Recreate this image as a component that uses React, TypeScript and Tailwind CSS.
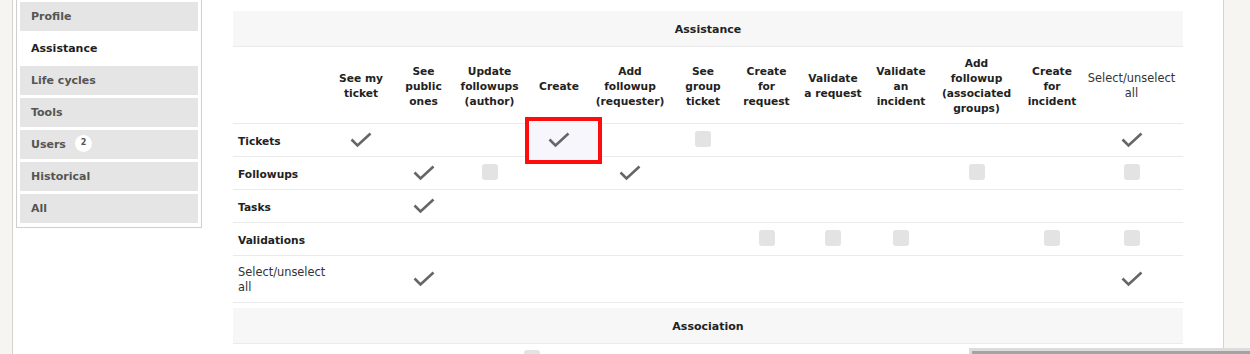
import React from "react";

const Check = () => (
  <svg width="22" height="16" viewBox="0 0 22 16" className="block">
    <path d="M1.5 7.5 L7.5 13.5 L20.5 1.5" fill="none" stroke="#666" strokeWidth="2.6" />
  </svg>
);

const Box = () => <div className="w-4 h-4 rounded-[3px] bg-[#e3e3e3]" />;

const cols =
  "grid grid-cols-[97px_62px_63px_69px_70px_72px_74px_53px_80px_56px_95px_56px_103px]";

type Cell = null | "c" | "b";

const headers: { lines: string[]; bold: boolean }[] = [
  { lines: ["See my", "ticket"], bold: true },
  { lines: ["See", "public", "ones"], bold: true },
  { lines: ["Update", "followups", "(author)"], bold: true },
  { lines: ["Create"], bold: true },
  { lines: ["Add", "followup", "(requester)"], bold: true },
  { lines: ["See", "group", "ticket"], bold: true },
  { lines: ["Create", "for", "request"], bold: true },
  { lines: ["Validate", "a request"], bold: true },
  { lines: ["Validate", "an", "incident"], bold: true },
  { lines: ["Add", "followup", "(associated", "groups)"], bold: true },
  { lines: ["Create", "for", "incident"], bold: true },
  { lines: ["Select/unselect", "all"], bold: false },
];

const rows: { label: string[]; bold: boolean; h: string; cells: Cell[] }[] = [
  { label: ["Tickets"], bold: true, h: "h-[33px]", cells: ["c", null, null, "c", null, "b", null, null, null, null, null, "c"] },
  { label: ["Followups"], bold: true, h: "h-[33px]", cells: [null, "c", "b", null, "c", null, null, null, null, "b", null, "b"] },
  { label: ["Tasks"], bold: true, h: "h-[33px]", cells: [null, "c", null, null, null, null, null, null, null, null, null, null] },
  { label: ["Validations"], bold: true, h: "h-[33px]", cells: [null, null, null, null, null, null, "b", "b", "b", null, "b", "b"] },
  { label: ["Select/unselect", "all"], bold: false, h: "h-[47px]", cells: [null, "c", null, null, null, null, null, null, null, null, null, "c"] },
];

const sideItems = ["Profile", "Assistance", "Life cycles", "Tools", "Users", "Historical", "All"];

export default function App() {
  return (
    <div className="relative h-[354px] w-[1250px] overflow-hidden flex bg-white font-['DejaVu_Sans',sans-serif] text-[#222]">
      <div className="w-[12px] shrink-0 bg-[#f6f5f1] border-r border-[#d6d3ce] box-content" />
      <div className="flex-1 flex pl-[3px]">
        {/* Sidebar */}
        <div className="w-[186px] shrink-0 self-start mt-[-3px] border border-[#cfcfcf] px-[3px] pt-[4px] pb-[4px] flex flex-col gap-[3px]">
          {sideItems.map((it) => {
            const active = it === "Assistance";
            return (
              <div
                key={it}
                className={
                  "h-[29px] flex items-center pl-[11px] pt-[1px] text-[11px] font-bold " +
                  (active ? "bg-white text-[#1e1e1e]" : "bg-[#e5e5e5] text-[#555]")
                }
              >
                <span>{it}</span>
                {it === "Users" && (
                  <span className="ml-[9px] w-[17px] h-[17px] rounded-full bg-white flex items-center justify-center text-[8px] font-bold text-[#555] -mt-[4px]">
                    2
                  </span>
                )}
              </div>
            );
          })}
        </div>

        {/* Table */}
        <div className="ml-[31px] w-[950px] shrink-0 mt-[11px]">
          <div className="h-[36px] pt-[3px] bg-[#f7f7f7] border-b border-[#ebebeb] flex items-center justify-center text-[11px] font-bold">
            Assistance
          </div>
          <div className={cols + " h-[77px] pt-[2px] border-b border-[#ebebeb]"}>
            <div />
            {headers.map((h, i) => (
              <div
                key={i}
                className={
                  "flex flex-col items-center justify-center text-center leading-[15px] whitespace-nowrap " +
                  (h.bold ? "font-bold text-[10.67px]" : "font-normal text-[11.4px] text-[#333]")
                }
              >
                {h.lines.map((l, j) => (
                  <span key={j}>{l}</span>
                ))}
              </div>
            ))}
          </div>
          {rows.map((r, ri) => (
            <div key={ri} className={cols + " " + r.h + " border-b border-[#ebebeb]"}>
              <div
                className={
                  "flex flex-col justify-center pl-[5px] pt-[2px] leading-[15px] " +
                  (r.bold ? "font-bold text-[10.67px]" : "font-normal text-[11.4px] text-[#333]")
                }
              >
                {r.label.map((l, j) => (
                  <span key={j}>{l}</span>
                ))}
              </div>
              {r.cells.map((c, ci) => (
                <div key={ci} className="relative flex items-center justify-center">
                  {ri === 0 && ci === 3 && (
                    <div className="absolute left-[1px] top-[-7px] w-[77px] h-[47px] border-[4px] border-[#ff0d0d] bg-[#f7f6fd] z-10" />
                  )}
                  <div className={"relative z-20 " + (c === "c" ? "-mt-[1px]" : "-mt-[3px]")}>
                    {c === "c" && <Check />}
                    {c === "b" && <Box />}
                  </div>
                </div>
              ))}
            </div>
          ))}
          <div className="mt-[5px] h-[36px] pt-[3px] bg-[#f7f7f7] border-b border-[#ebebeb] flex items-center justify-center text-[11px] font-bold">
            Association
          </div>
          <div className="pl-[291px] pt-[6px]">
            <Box />
          </div>
        </div>
      </div>
      <div className="w-[26px] shrink-0 bg-[#f6f5f1] border-l border-[#d6d3ce] box-content" />

      <div className="absolute left-[969px] right-0 top-[348px] h-[6px] bg-[#dcdcdc]">
        <div className="absolute left-[3px] right-0 top-[3px] bottom-0 bg-[#a3a3a3]" />
      </div>
    </div>
  );
}
